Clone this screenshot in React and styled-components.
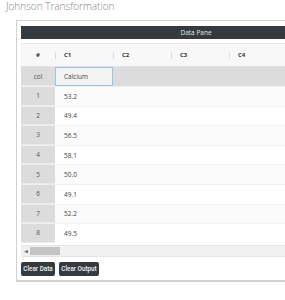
import React from "react"
import styled, { createGlobalStyle } from "styled-components"

const Global = createGlobalStyle`
  html, body {
    margin: 0;
    padding: 0;
    background: #fff;
    overflow: hidden;
  }
  body {
    font-family: "Open Sans", "Liberation Sans", sans-serif;
  }
`

const Page = styled.div`
  width: 400px;
`

const Title = styled.h2`
  margin: 0;
  padding-left: 6px;
  font-family: "Open Sans", "Liberation Sans", sans-serif;
  font-weight: 300;
  font-size: 10px;
  line-height: 12px;
  color: #868686;
`

const Panel = styled.div`
  margin: 8px 0 0 16px;
  width: 350px;
  border: 1px solid #d2d2d2;
  border-bottom-width: 2px;
  padding: 5px 0 4px 4px;
`

const PaneBar = styled.div`
  height: 13px;
  background: #343a40;
  color: #e4e4e4;
  font-size: 6.5px;
  line-height: 13px;
  text-align: center;
`

const Grid = styled.div`
  margin-top: 4px;
  width: 345px;
  overflow: hidden;
`

const Row = styled.div`
  display: grid;
  grid-template-columns: 34px repeat(6, 58px);
  height: ${p => p.h}px;
  background: ${p => p.bg || "#fff"};
  border-top: 1px solid ${p => p.line || "#f0f0f0"};
  box-sizing: border-box;
`

const HeadCell = styled.div`
  position: relative;
  display: flex;
  align-items: center;
  padding-left: ${p => (p.index ? 0 : 9)}px;
  justify-content: ${p => (p.index ? "center" : "flex-start")};
  font-size: 6px;
  font-weight: 700;
  color: #333;
  &::before {
    content: "";
    display: ${p => (p.index ? "none" : "block")};
    position: absolute;
    left: 0;
    top: 8px;
    height: 7px;
    width: 1px;
    background: #d6dde6;
  }
`

const IndexCell = styled.div`
  display: flex;
  align-items: center;
  justify-content: center;
  background: #dcdcdc;
  border-bottom: 1px solid #eaeaea;
  font-size: 6.5px;
  color: #555;
`

const Cell = styled.div`
  display: flex;
  align-items: center;
  font-size: 6.5px;
  color: #444;
  box-sizing: border-box;
  border: ${p => (p.active ? "1px solid #9cc3e6" : "none")};
  background: ${p => (p.active ? "#f3f3f3" : "transparent")};
  padding-left: ${p => (p.active ? 8 : 9)}px;
`

const Scroll = styled.div`
  display: flex;
  align-items: center;
  height: 10px;
  margin-top: 2px;
  background: #f1f1f1;
  border-top: 1px solid #e4e4e4;
  border-bottom: 1px solid #e4e4e4;
`

const Arrow = styled.span`
  width: 9px;
  font-size: 5px;
  color: #777;
  text-align: center;
`

const Thumb = styled.div`
  width: 30px;
  height: 8px;
  background: #c4c4c4;
`

const Buttons = styled.div`
  display: flex;
  gap: 4px;
  margin-top: 5px;
`

const Button = styled.button`
  height: 14px;
  padding: 0;
  border: none;
  border-radius: 2px;
  background: #343a40;
  color: #f2f2f2;
  font-family: Roboto, "Liberation Sans", sans-serif;
  font-size: 6.3px;
  font-weight: 500;
  line-height: 14px;
  width: ${p => p.w}px;
  white-space: nowrap;
`

const cols = ["C1", "C2", "C3", "C4", "", ""]
const values = ["53.2", "49.4", "56.5", "58.1", "50.0", "49.1", "52.2", "49.5"]

export default function App() {
  return (
    <Page>
      <Global />
      <Title>Johnson Transformation</Title>
      <Panel>
        <PaneBar>Data Pane</PaneBar>
        <Grid>
          <Row h={23} bg="#f8f8f8" line="#e6e6e6">
            <HeadCell index>#</HeadCell>
            {cols.map((c, i) => (
              <HeadCell key={i}>{c}</HeadCell>
            ))}
          </Row>
          <Row h={20} bg="#dcdcdc" line="#e2e2e2">
            <IndexCell>col</IndexCell>
            <Cell active>Calcium</Cell>
          </Row>
          {values.map((v, i) => (
            <Row key={i} h={19.6} bg={i % 2 ? "#fff" : "#fbfbfb"}>
              <IndexCell>{i + 1}</IndexCell>
              <Cell>{v}</Cell>
            </Row>
          ))}
          <Scroll>
            <Arrow>◀</Arrow>
            <Thumb />
          </Scroll>
        </Grid>
        <Buttons>
          <Button w={34}>Clear Data</Button>
          <Button w={40}>Clear Output</Button>
        </Buttons>
      </Panel>
    </Page>
  )
}
